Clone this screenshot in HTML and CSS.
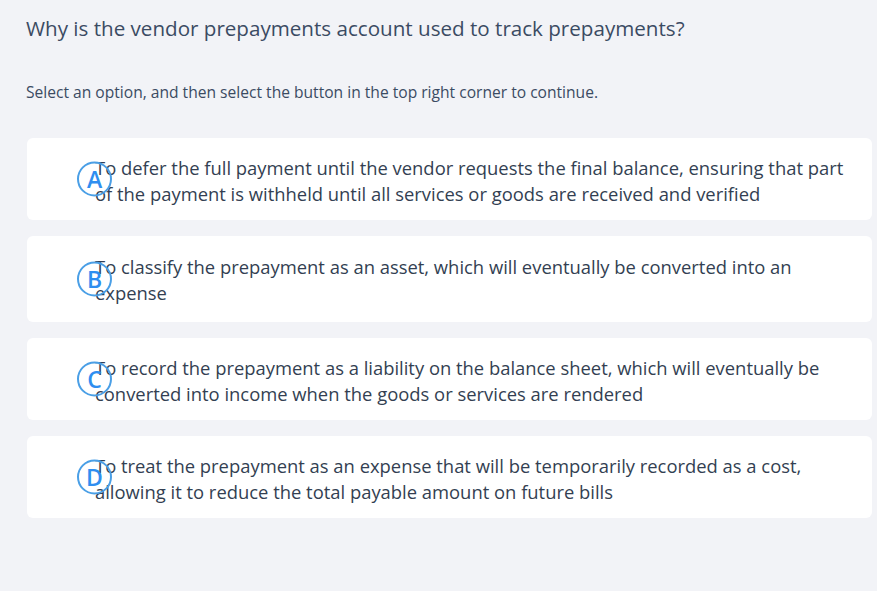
FILE: index.html
```html
<!DOCTYPE html>
<html>
<head>
<meta charset="utf-8">
<link rel="stylesheet" href="styles.css">
</head>
<body>
<main class="page">
  <h1 class="question">Why is the vendor prepayments account used to track prepayments?</h1>
  <p class="instructions">Select an option, and then select the button in the top right corner to continue.</p>
  <div class="options">
    <div class="option">
      <span class="badge">A</span>
      <span class="option-text">To defer the full payment until the vendor requests the final balance, ensuring that part of the payment is withheld until all services or goods are received and verified</span>
    </div>
    <div class="option option-tall">
      <span class="badge">B</span>
      <span class="option-text">To classify the prepayment as an asset, which will eventually be converted into an expense</span>
    </div>
    <div class="option">
      <span class="badge">C</span>
      <span class="option-text">To record the prepayment as a liability on the balance sheet, which will eventually be converted into income when the goods or services are rendered</span>
    </div>
    <div class="option">
      <span class="badge">D</span>
      <span class="option-text">To treat the prepayment as an expense that will be temporarily recorded as a cost, allowing it to reduce the total payable amount on future bills</span>
    </div>
  </div>
</main>
</body>
</html>
```
FILE: styles.css
```css
html, body {
  margin: 0;
  padding: 0;
  background: #f2f3f7;
}
body {
  font-family: "Open Sans", "Noto Sans", sans-serif;
  color: #333f52;
}
.page {
  padding: 13px 5px 40px 26px;
}
.question {
  margin: 0;
  font-size: 20.6px;
  font-weight: 400;
  line-height: 30px;
  color: #3b4b63;
}
.instructions {
  margin: 39px 0 0 0;
  font-size: 15.6px;
  line-height: 20px;
  color: #3b4b63;
}
.options {
  margin-top: 36px;
  margin-left: 1px;
  display: flex;
  flex-direction: column;
  gap: 16px;
}
.option {
  position: relative;
  background: #ffffff;
  border-radius: 6px;
  padding: 17px 20px 13px 68px;
  display: flex;
  align-items: center;
}
.option-tall {
  padding-top: 18px;
  padding-bottom: 16px;
}
.badge {
  position: absolute;
  left: 50px;
  top: 50%;
  transform: translateY(-50%);
  width: 31px;
  height: 31px;
  border: 2px solid #4a9fe6;
  border-radius: 50%;
  display: flex;
  align-items: center;
  justify-content: center;
  font-size: 23px;
  font-weight: 600;
  color: #2f8ef0;
  line-height: 1;
}
.option-text {
  font-size: 18.4px;
  line-height: 26px;
  color: #333f52;
}
```
